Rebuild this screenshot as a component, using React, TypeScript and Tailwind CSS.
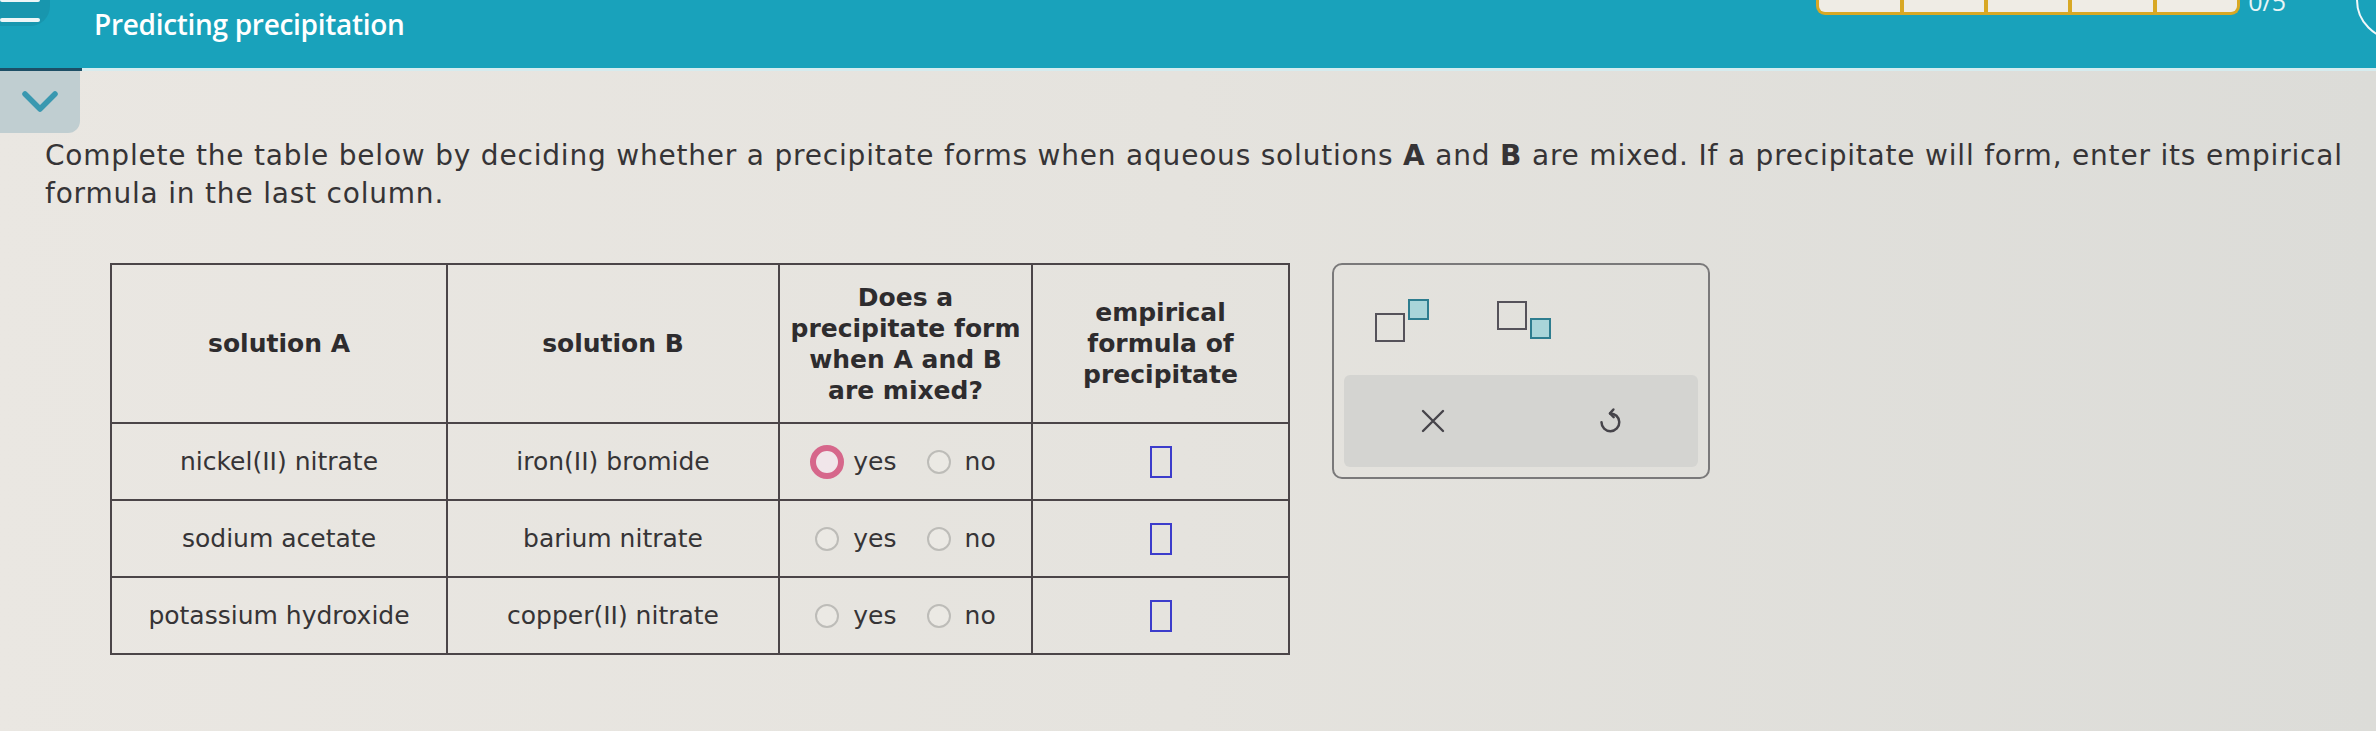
import type { ReactNode } from "react";

type Row = {
  a: string;
  b: string;
  picked?: "yes" | "no";
};

const rows: Row[] = [
  { a: "nickel(II) nitrate", b: "iron(II) bromide", picked: "yes" },
  { a: "sodium acetate", b: "barium nitrate" },
  { a: "potassium hydroxide", b: "copper(II) nitrate" },
];

function Radio({ on, label }: { on?: boolean; label: string }) {
  return (
    <label className="flex items-center gap-[14px]">
      {on ? (
        <span className="-m-[5px] h-[34px] w-[34px] rounded-full border-[6px] border-[#d6678b] bg-[#f1e6ea]" />
      ) : (
        <span className="h-[24px] w-[24px] rounded-full border-2 border-[#bdbcb8] bg-[#ebe9e4]" />
      )}
      <span>{label}</span>
    </label>
  );
}

function Th({ children, w }: { children: ReactNode; w: string }) {
  return (
    <th className={`${w} border-2 border-[#4b4548] px-2 text-center align-middle font-bold leading-[31px] text-[#2e2c2e]`}>
      {children}
    </th>
  );
}

function Td({ children }: { children: ReactNode }) {
  return <td className="border-2 border-[#4b4548] text-center align-middle">{children}</td>;
}

function SquareIcon({ sub }: { sub?: boolean }) {
  return (
    <div className={`flex gap-[3px] ${sub ? "items-end" : "items-start"}`}>
      <span className={`h-[29px] w-[30px] border-2 border-[#55525a] ${sub ? "mb-[9px]" : "mt-[14px]"}`} />
      <span className="h-[21px] w-[21px] border-2 border-[#2e7d8f] bg-[#a9d5d9]" />
    </div>
  );
}

export default function App() {
  return (
    <div className="h-[731px] w-[2376px] overflow-hidden bg-linear-to-r from-[#eae7e2] via-[#e5e3de] to-[#dcdcd8] font-['DejaVu_Sans',Verdana,sans-serif] text-[#363436]">
      {/* top bar */}
      <header className="flex h-[68px] items-start bg-[#19a2bb]">
        <div className="-mt-[6px] flex h-[32px] w-[50px] flex-col justify-between rounded-br-[20px] bg-[#1896ae] py-[4px] pr-[10px]">
          <span className="h-[4px] w-[40px] rounded-full bg-[#eef6f7]" />
          <span className="h-[4px] w-[40px] rounded-full bg-[#eef6f7]" />
        </div>
        <div className="ml-[44px] mt-[3px] font-['Open_Sans',sans-serif] text-[28px] font-semibold tracking-[-0.3px] text-white">
          Predicting precipitation
        </div>
        <div className="flex-1" />
        <div className="-mt-[6px] flex h-[21px] w-[424px] gap-[4px] rounded-b-[9px] border-[3px] border-t-0 border-[#d8a824] bg-[#d8a824]">
          <span className="flex-1 rounded-bl-[6px] bg-[#efece5]" />
          <span className="flex-1 bg-[#efece5]" />
          <span className="flex-1 bg-[#efece5]" />
          <span className="flex-1 bg-[#efece5]" />
          <span className="flex-1 rounded-br-[6px] bg-[#efece5]" />
        </div>
        <div className="-mt-[17px] ml-[8px] font-['Open_Sans',sans-serif] text-[25px] text-[#e8f5f7]">0/5</div>
        <div className="-mr-[60px] -mt-[40px] ml-[70px] h-[80px] w-[80px] rounded-full border-2 border-[#f2f8f9]" />
      </header>
      <div className="flex h-[3px]">
        <span className="w-[82px] bg-[#1d4f66]" />
        <span className="flex-1 bg-[#d6ecef]" />
      </div>

      {/* collapse tab */}
      <div className="flex h-[62px] w-[80px] items-center justify-center rounded-br-[12px] bg-[#c0ced1]">
        <svg width="36" height="22" viewBox="0 0 36 22" fill="none">
          <path d="M3 3 L18 18 L33 3" stroke="#3a98b0" strokeWidth="5.5" strokeLinecap="round" strokeLinejoin="round" />
        </svg>
      </div>

      <p className="ml-[45px] mt-[4px] w-[2325px] text-[28px] leading-[38px] tracking-[0.8px]">
        Complete the table below by deciding whether a precipitate forms when aqueous solutions <b>A</b> and <b>B</b> are
        mixed. If a precipitate will form, enter its empirical formula in the last column.
      </p>

      <div className="ml-[110px] mt-[50px] flex items-start gap-[42px]">
        <table className="border-collapse text-[25px]">
          <thead>
            <tr className="h-[159px]">
              <Th w="w-[336px]">solution A</Th>
              <Th w="w-[332px]">solution B</Th>
              <Th w="w-[253px]">
                Does a
                <br />
                precipitate form
                <br />
                when A and B
                <br />
                are mixed?
              </Th>
              <Th w="w-[257px]">
                empirical
                <br />
                formula of
                <br />
                precipitate
              </Th>
            </tr>
          </thead>
          <tbody>
            {rows.map((r) => (
              <tr key={r.a} className="h-[77px]">
                <Td>{r.a}</Td>
                <Td>{r.b}</Td>
                <Td>
                  <div className="flex items-center justify-center gap-[30px]">
                    <Radio on={r.picked === "yes"} label="yes" />
                    <Radio on={r.picked === "no"} label="no" />
                  </div>
                </Td>
                <Td>
                  <span className="mx-auto block h-[32px] w-[22px] border-2 border-[#3c3ccb]" />
                </Td>
              </tr>
            ))}
          </tbody>
        </table>

        {/* formula toolbox */}
        <div className="flex h-[216px] w-[378px] flex-col rounded-[10px] border-2 border-[#7a797a] p-[10px] pt-0">
          <div className="flex flex-1 items-center gap-[68px] pl-[31px]">
            <SquareIcon />
            <SquareIcon sub />
          </div>
          <div className="flex h-[92px] rounded-[6px] bg-[#d4d4d1]">
            <div className="flex flex-1 items-center justify-center">
              <svg width="26" height="26" viewBox="0 0 26 26" fill="none">
                <path d="M3 3 L23 23 M23 3 L3 23" stroke="#46444a" strokeWidth="2.4" strokeLinecap="round" />
              </svg>
            </div>
            <div className="flex flex-1 items-center justify-center">
              <svg width="32" height="34" viewBox="0 0 24 26" fill="none">
                <path d="M5.5 14 A6.8 6.8 0 1 0 12 7.2" stroke="#46444a" strokeWidth="1.9" strokeLinecap="round" />
                <path d="M14.6 4.2 L12 7.2 L14.8 10" stroke="#46444a" strokeWidth="1.9" strokeLinecap="round" strokeLinejoin="round" />
              </svg>
            </div>
          </div>
        </div>
      </div>
    </div>
  );
}
